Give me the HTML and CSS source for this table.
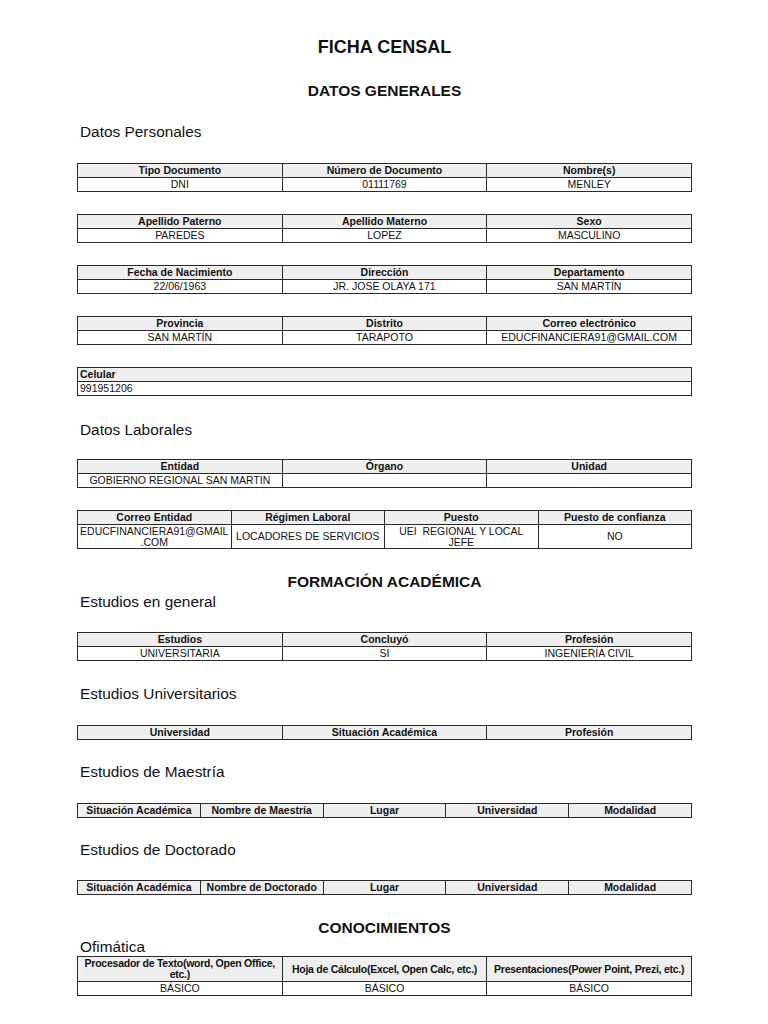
FILE: index.html
```html
<!DOCTYPE html>
<html lang="es">
<head>
<meta charset="utf-8">
<title>Ficha Censal</title>
<link rel="stylesheet" href="styles.css">
</head>
<body>
<div class="page">
  <h1 class="title">FICHA CENSAL</h1>
  <h2 class="section s1">DATOS GENERALES</h2>
  <h3 class="sub m23">Datos Personales</h3>

  <table class="grid m22">
    <tr><th>Tipo Documento</th><th>Número de Documento</th><th>Nombre(s)</th></tr>
    <tr><td>DNI</td><td>01111769</td><td>MENLEY</td></tr>
  </table>
  <table class="grid m22">
    <tr><th>Apellido Paterno</th><th>Apellido Materno</th><th>Sexo</th></tr>
    <tr><td>PAREDES</td><td>LOPEZ</td><td>MASCULINO</td></tr>
  </table>
  <table class="grid m22">
    <tr><th>Fecha de Nacimiento</th><th>Dirección</th><th>Departamento</th></tr>
    <tr><td>22/06/1963</td><td>JR. JOSE OLAYA 171</td><td>SAN MARTÍN</td></tr>
  </table>
  <table class="grid m22">
    <tr><th>Provincia</th><th>Distrito</th><th>Correo electrónico</th></tr>
    <tr><td>SAN MARTÍN</td><td>TARAPOTO</td><td>EDUCFINANCIERA91@GMAIL.COM</td></tr>
  </table>
  <table class="grid m22 left">
    <tr><th>Celular</th></tr>
    <tr><td>991951206</td></tr>
  </table>

  <h3 class="sub m25">Datos Laborales</h3>
  <table class="grid m20">
    <tr><th>Entidad</th><th>Órgano</th><th>Unidad</th></tr>
    <tr><td>GOBIERNO REGIONAL SAN MARTIN</td><td></td><td></td></tr>
  </table>
  <table class="grid m22 two">
    <tr><th>Correo Entidad</th><th>Régimen Laboral</th><th>Puesto</th><th>Puesto de confianza</th></tr>
    <tr><td>EDUCFINANCIERA91@GMAIL<br>.COM</td><td>LOCADORES DE SERVICIOS</td><td>UEI&nbsp; REGIONAL Y LOCAL<br>JEFE</td><td>NO</td></tr>
  </table>

  <h2 class="section m24">FORMACIÓN ACADÉMICA</h2>
  <h3 class="sub m2">Estudios en general</h3>
  <table class="grid m21">
    <tr><th>Estudios</th><th>Concluyó</th><th>Profesión</th></tr>
    <tr><td>UNIVERSITARIA</td><td>SI</td><td>INGENIERÍA CIVIL</td></tr>
  </table>

  <h3 class="sub m24">Estudios Universitarios</h3>
  <table class="grid m22">
    <tr><th>Universidad</th><th>Situación Académica</th><th>Profesión</th></tr>
  </table>

  <h3 class="sub m23">Estudios de Maestría</h3>
  <table class="grid m22">
    <tr><th>Situación Académica</th><th>Nombre de Maestría</th><th>Lugar</th><th>Universidad</th><th>Modalidad</th></tr>
  </table>

  <h3 class="sub m23">Estudios de Doctorado</h3>
  <table class="grid m21">
    <tr><th>Situación Académica</th><th>Nombre de Doctorado</th><th>Lugar</th><th>Universidad</th><th>Modalidad</th></tr>
  </table>

  <h2 class="section m24">CONOCIMIENTOS</h2>
  <h3 class="sub m1">Ofimática</h3>
  <table class="grid ofi">
    <tr><th>Procesador de Texto(word, Open Office,<br>etc.)</th><th>Hoja de Cálculo(Excel, Open Calc, etc.)</th><th>Presentaciones(Power Point, Prezi, etc.)</th></tr>
    <tr><td>BÁSICO</td><td>BÁSICO</td><td>BÁSICO</td></tr>
  </table>
</div>
</body>
</html>
```

FILE: styles.css
```css
html, body {
  margin: 0;
  padding: 0;
  background: #ffffff;
}

body {
  font-family: "Liberation Sans", Arial, sans-serif;
  color: #111111;
}

.page {
  width: 615px;
  margin-left: 77px;
  display: flex;
  flex-direction: column;
}

.title {
  margin: 37px 0 0 0;
  font-size: 18px;
  line-height: 21px;
  font-weight: bold;
  text-align: center;
}

.section {
  margin: 0;
  font-size: 15.5px;
  line-height: 18px;
  font-weight: bold;
  text-align: center;
}

.s1 { margin-top: 24px; }

.sub {
  margin: 0;
  padding-left: 3px;
  font-size: 15.4px;
  line-height: 18px;
  font-weight: normal;
}

.m1 { margin-top: 1px; }
.m2 { margin-top: 2px; }
.m20 { margin-top: 20px; }
.m21 { margin-top: 21px; }
.m22 { margin-top: 22px; }
.m23 { margin-top: 23px; }
.m24 { margin-top: 24px; }
.m25 { margin-top: 25px; }

.grid {
  width: 615px;
  border-collapse: collapse;
  table-layout: fixed;
  font-size: 10.5px;
  line-height: 11px;
}

.grid th,
.grid td {
  border: 1px solid #2a2a2a;
  padding: 0 2px;
  text-align: center;
  vertical-align: middle;
  overflow: hidden;
}

.grid th {
  background: #efefef;
  font-weight: bold;
  height: 13px;
}

.grid td {
  font-weight: normal;
  height: 13px;
}

.left th,
.left td {
  text-align: left;
}

.two td {
  height: 23px;
}

.ofi th {
  height: 24px;
  padding: 0;
  letter-spacing: -0.25px;
}
```
